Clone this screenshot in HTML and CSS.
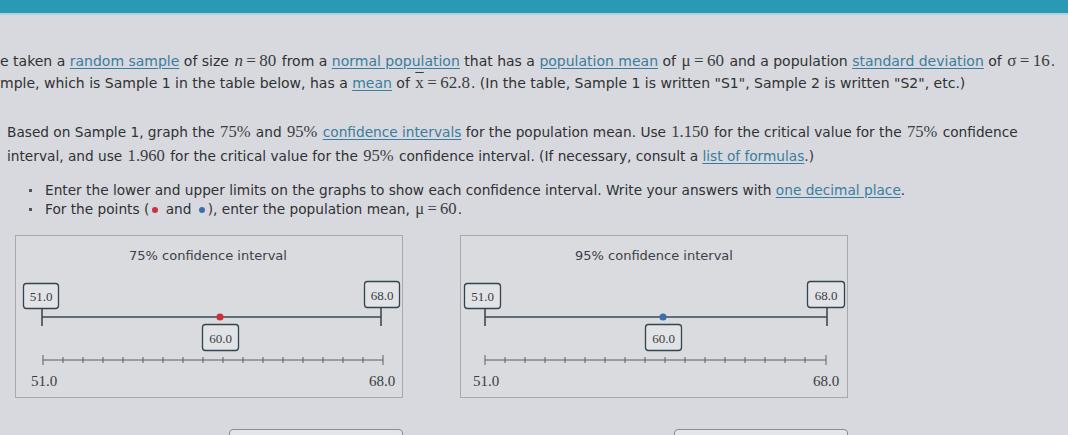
FILE: index.html
```html
<!DOCTYPE html>
<html>
<head>
<meta charset="utf-8">
<link rel="stylesheet" href="styles.css">
</head>
<body>
<div class="topbar"></div>
<div class="content">
  <p class="intro">e taken a <a>random sample</a> of size <span class="m"><i>n</i>&thinsp;=&thinsp;80</span> from a <a>normal population</a> that has a <a>population mean</a> of <span class="m">μ&thinsp;=&thinsp;60</span> and a population <a>standard deviation</a> of <span class="m">σ&thinsp;=&thinsp;16</span>.<br>mple, which is Sample 1 in the table below, has a <a>mean</a> of <span class="m"><span class="xbar">x</span>&thinsp;=&thinsp;62.8</span>. (In the table, Sample 1 is written "S1", Sample 2 is written "S2", etc.)</p>

  <p class="task">Based on Sample 1, graph the <span class="m">75%</span> and <span class="m">95%</span> <a>confidence intervals</a> for the population mean. Use <span class="m">1.150</span> for the critical value for the <span class="m">75%</span> confidence<br>interval, and use <span class="m">1.960</span> for the critical value for the <span class="m">95%</span> confidence interval. (If necessary, consult a <a>list of formulas</a>.)</p>

  <ul class="bullets">
    <li>Enter the lower and upper limits on the graphs to show each confidence interval. Write your answers with <a>one decimal place</a>.</li>
    <li>For the points (<span class="pt red"></span> and <span class="pt blue"></span>), enter the population mean, <span class="m">μ&thinsp;=&thinsp;60</span>.</li>
  </ul>

  <div class="graphs">
    <div class="col">
      <div class="panel p1">
        <svg class="plot" width="386" height="161" viewBox="0 0 386 161">
          <text class="title" x="192" y="24" text-anchor="middle">75% confidence interval</text>
          <line class="iv" x1="26" y1="81" x2="365" y2="81"/>
          <line class="iv" x1="26" y1="72" x2="26" y2="90"/>
          <line class="iv" x1="365" y1="72" x2="365" y2="90"/>
          <rect class="lbl" x="7.5" y="47.5" width="35" height="25" rx="3"/>
          <text class="lt" x="25" y="65" text-anchor="middle">51.0</text>
          <rect class="lbl" x="348.5" y="45.5" width="35" height="26" rx="3"/>
          <text class="lt" x="366" y="64" text-anchor="middle">68.0</text>
          <circle class="dot-red" cx="204" cy="81" r="3.6"/>
          <rect class="lbl" x="186.5" y="88.5" width="36" height="26" rx="3"/>
          <text class="lt" x="204.5" y="107" text-anchor="middle">60.0</text>
          <g class="axis">
            <line x1="27" y1="124" x2="367" y2="124"/>
            <line x1="27" y1="119" x2="27" y2="129"/>
            <line x1="47" y1="121" x2="47" y2="127"/><line x1="67" y1="121" x2="67" y2="127"/><line x1="87" y1="121" x2="87" y2="127"/><line x1="107" y1="121" x2="107" y2="127"/><line x1="127" y1="121" x2="127" y2="127"/><line x1="147" y1="121" x2="147" y2="127"/><line x1="167" y1="121" x2="167" y2="127"/><line x1="187" y1="121" x2="187" y2="127"/><line x1="207" y1="121" x2="207" y2="127"/><line x1="227" y1="121" x2="227" y2="127"/><line x1="247" y1="121" x2="247" y2="127"/><line x1="267" y1="121" x2="267" y2="127"/><line x1="287" y1="121" x2="287" y2="127"/><line x1="307" y1="121" x2="307" y2="127"/><line x1="327" y1="121" x2="327" y2="127"/><line x1="347" y1="121" x2="347" y2="127"/>
            <line x1="367" y1="119" x2="367" y2="129"/>
          </g>
          <text class="ax" x="28" y="150" text-anchor="middle">51.0</text>
          <text class="ax" x="366" y="150" text-anchor="middle">68.0</text>
        </svg>
      </div>
      <div class="btnrow"><div class="btn"></div></div>
    </div>
    <div class="col">
      <div class="panel p2">
        <svg class="plot" width="386" height="161" viewBox="0 0 386 161">
          <text class="title" x="193" y="24" text-anchor="middle">95% confidence interval</text>
          <line class="iv" x1="24" y1="81" x2="366" y2="81"/>
          <line class="iv" x1="24" y1="72" x2="24" y2="90"/>
          <line class="iv" x1="366" y1="71" x2="366" y2="90"/>
          <rect class="lbl" x="3.5" y="47.5" width="36" height="25" rx="3"/>
          <text class="lt" x="21.5" y="65" text-anchor="middle">51.0</text>
          <rect class="lbl" x="346.5" y="45.5" width="37" height="26" rx="3"/>
          <text class="lt" x="365" y="64" text-anchor="middle">68.0</text>
          <circle class="dot-blue" cx="202" cy="81" r="3.6"/>
          <rect class="lbl" x="184.5" y="88.5" width="36" height="26" rx="3"/>
          <text class="lt" x="202.5" y="107" text-anchor="middle">60.0</text>
          <g class="axis">
            <line x1="24" y1="124" x2="365" y2="124"/>
            <line x1="24" y1="119" x2="24" y2="129"/>
            <line x1="44" y1="121" x2="44" y2="127"/><line x1="64" y1="121" x2="64" y2="127"/><line x1="84" y1="121" x2="84" y2="127"/><line x1="104" y1="121" x2="104" y2="127"/><line x1="124" y1="121" x2="124" y2="127"/><line x1="144" y1="121" x2="144" y2="127"/><line x1="164" y1="121" x2="164" y2="127"/><line x1="184" y1="121" x2="184" y2="127"/><line x1="204" y1="121" x2="204" y2="127"/><line x1="224" y1="121" x2="224" y2="127"/><line x1="244" y1="121" x2="244" y2="127"/><line x1="264" y1="121" x2="264" y2="127"/><line x1="284" y1="121" x2="284" y2="127"/><line x1="304" y1="121" x2="304" y2="127"/><line x1="324" y1="121" x2="324" y2="127"/><line x1="344" y1="121" x2="344" y2="127"/>
            <line x1="365" y1="119" x2="365" y2="129"/>
          </g>
          <text class="ax" x="25" y="150" text-anchor="middle">51.0</text>
          <text class="ax" x="365" y="150" text-anchor="middle">68.0</text>
        </svg>
      </div>
      <div class="btnrow"><div class="btn"></div></div>
    </div>
  </div>
</div>
</body>
</html>
```

FILE: styles.css
```css
html, body {
  margin: 0;
  padding: 0;
}
body {
  background: #d8d9de;
  font-family: "DejaVu Sans", Verdana, sans-serif;
  font-size: 14px;
  color: #2f3133;
  width: 1068px;
  height: 435px;
  overflow: hidden;
}
.topbar {
  height: 13px;
  background: #2a9ab4;
  border-bottom: 2px solid #a9d3df;
}
.content {
  padding-top: 35px;
}
p { margin: 0; white-space: nowrap; }
a {
  color: #3a7d9e;
  text-decoration: underline;
  text-underline-offset: 2px;
}
.m {
  font-family: "Liberation Serif", "DejaVu Serif", serif;
  font-size: 17px;
  color: #3a3d40;
  margin: 0 1px;
}
.m i { font-style: italic; }
.xbar { text-decoration: overline; }
.intro {
  line-height: 21px;
}
.task {
  margin-top: 26px;
  padding-left: 7px;
  line-height: 23px;
  font-size: 13.7px;
}
.bullets {
  list-style: none;
  margin: 13px 0 0 0;
  padding: 0 0 0 45px;
  line-height: 18.5px;
  font-size: 13.7px;
}
.task .m, .bullets .m { font-size: 16.6px; }
.bullets li {
  position: relative;
  white-space: nowrap;
}
.bullets li::before {
  content: "";
  position: absolute;
  left: -16px;
  top: 8px;
  width: 3px;
  height: 3px;
  background: #555;
}
.pt {
  display: inline-block;
  width: 6px;
  height: 6px;
  border-radius: 50%;
  vertical-align: 1px;
  margin: 0 3px;
}
.pt.red { background: #c9323d; }
.pt.blue { background: #3b6fa9; }
.graphs {
  display: flex;
  gap: 57px;
  margin-top: 17px;
  padding-left: 15px;
}
.col {
  display: flex;
  flex-direction: column;
  gap: 31px;
}
.panel {
  border: 1px solid #a7a9ad;
  background: #d9dbdf;
  line-height: 0;
}
.plot { display: block; }
.title {
  font-family: "DejaVu Sans", Verdana, sans-serif;
  font-size: 13px;
  fill: #3b4148;
}
.iv { stroke: #3a4a55; stroke-width: 1.6; }
.lbl { fill: #e2e3e6; stroke: #34444e; stroke-width: 1.3; }
.lt {
  font-family: "Liberation Serif", "DejaVu Serif", serif;
  font-size: 13px;
  fill: #3a3d40;
}
.dot-red { fill: #c9323d; }
.dot-blue { fill: #3b6fa9; }
.axis line { stroke: #55606a; stroke-width: 1; }
.ax {
  font-family: "Liberation Serif", "DejaVu Serif", serif;
  font-size: 15px;
  fill: #3a3d40;
}
.btnrow {
  display: flex;
  justify-content: flex-end;
}
.btn {
  width: 172px;
  height: 30px;
  border: 1px solid #8a8d92;
  border-radius: 4px;
  background: #e4e5e8;
}
```
